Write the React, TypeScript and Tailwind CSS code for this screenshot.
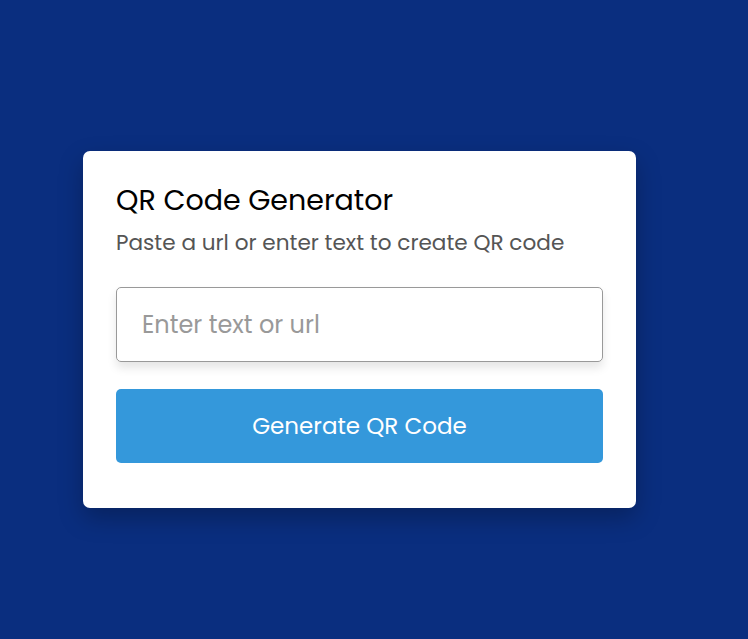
import React from "react";

export default function App() {
  return (
    <div className="min-h-[639px] w-full bg-[#0a2e7f] pt-[151px] pl-[83px]" style={{ fontFamily: "Poppins, Inter, 'Noto Sans', sans-serif" }}>
      <div className="w-[553px] h-[357px] bg-white rounded-[7px] px-[33px] pt-[29px] shadow-[0_10px_25px_rgba(0,0,0,0.25)]">
        <h1 className="text-[28.5px] leading-[40px] font-normal text-black">QR Code Generator</h1>
        <p className="mt-[8px] text-[21.6px] leading-[30px] text-[#555]">Paste a url or enter text to create QR code</p>
        <input
          autoFocus
          placeholder="Enter text or url"
          className="mt-[29px] block w-[487px] h-[75px] rounded-[5px] border border-[#999] pl-[25px] pr-[24px] text-[24px] text-black placeholder:text-[#999] outline-none shadow-[0_6px_10px_rgba(0,0,0,0.1)]"
        />
        <button className="mt-[27px] block w-[487px] h-[74px] rounded-[5px] bg-[#3498db] text-white text-[23px]">
          Generate QR Code
        </button>
      </div>
    </div>
  );
}
